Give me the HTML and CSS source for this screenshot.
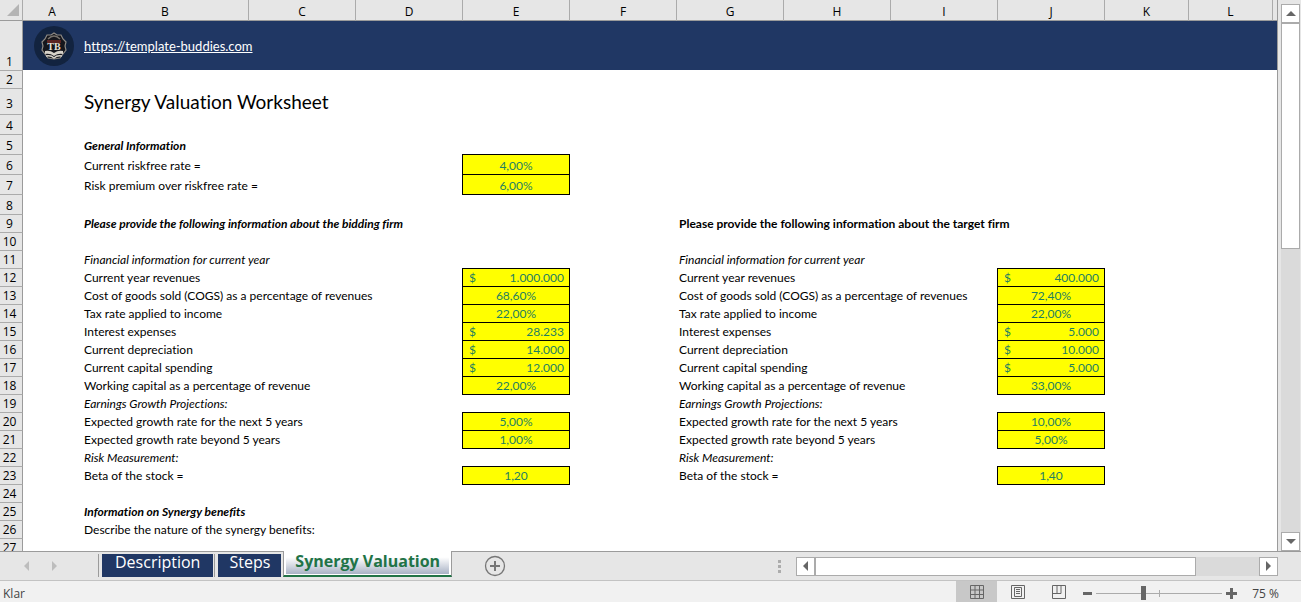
FILE: index.html
```html
<!DOCTYPE html>
<html lang="en">
<head>
  <meta charset="UTF-8">
  <meta name="viewport" content="width=device-width, initial-scale=1.0">
  <title>Synergy Valuation Worksheet</title>
  <link rel="stylesheet" href="styles.css">
</head>
<body>
  <main class="workspace">
    <div class="sheet">
      <table class="grid">
        <colgroup>
          <col class="col-head">
          <col class="col-a">
          <col class="col-b">
          <col class="col-std" span="8">
          <col class="col-end" span="2">
          <col>
        </colgroup>
        <thead>
          <tr>
            <th class="corner"><svg width="12" height="12" viewBox="0 0 12 12"><path d="M12 0v12H0z" fill="#b4b4b4"/></svg></th>
            <th>A</th><th>B</th><th>C</th><th>D</th><th>E</th><th>F</th><th>G</th><th>H</th><th>I</th><th>J</th><th>K</th><th>L</th><th></th>
          </tr>
        </thead>
        <tbody>
          <tr class="banner">
            <th>1</th>
            <td class="logo-cell">
              <svg class="logo" width="40" height="40" viewBox="0 0 40 40">
                <circle cx="20" cy="20" r="20" fill="#12233f"/>
                <path d="M20 7l3 2 4 0 2 4 3 3-1 4 1 4-3 4-3 4-6 1-6-1-3-4-3-4 1-4-1-4 3-3 2-4 4 0z" fill="#15161c" stroke="#8f8b85" stroke-width="1.2"/>
                <path d="M14 13q6-6 12 0" fill="none" stroke="#77736d" stroke-width="1.5"/>
                <path d="M13 14h14v3H13z" fill="#5c2523"/>
                <text x="20" y="24" class="logo-text">TB</text>
                <path d="M11 25q5-1 9 2 4-3 9-2v3q-5-1-9 2-4-3-9-2z" fill="#d6d2c9"/>
                <path d="M12 30q5-1 8 2 3-3 8-2" fill="none" stroke="#d6d2c9" stroke-width="1.5"/>
              </svg>
            </td>
            <td colspan="12"><a href="https://template-buddies.com">https://template-buddies.com</a></td>
          </tr>
          <tr><th>2</th><td colspan="13"></td></tr>
          <tr class="title-row"><th>3</th><td></td><td colspan="12" class="title">Synergy Valuation Worksheet</td></tr>
          <tr class="tall"><th>4</th><td colspan="13"></td></tr>
          <tr class="tall"><th>5</th><td></td><td colspan="12" class="bold italic">General Information</td></tr>
          <tr class="tall"><th>6</th><td></td><td colspan="3">Current riskfree rate =</td><td class="input">4,00%</td><td colspan="8"></td></tr>
          <tr class="tall"><th>7</th><td></td><td colspan="3">Risk premium over riskfree rate =</td><td class="input">6,00%</td><td colspan="8"></td></tr>
          <tr class="tall"><th>8</th><td colspan="13"></td></tr>
          <tr><th>9</th><td></td><td colspan="5" class="bold italic">Please provide the following information about the bidding firm</td><td colspan="7" class="bold">Please provide the following information about the target firm</td></tr>
          <tr><th>10</th><td colspan="13"></td></tr>
          <tr><th>11</th><td></td><td colspan="5" class="italic">Financial information for current year</td><td colspan="7" class="italic">Financial information for current year</td></tr>
          <tr><th>12</th><td></td><td colspan="3">Current year revenues</td><td class="input"><div class="money"><span>$</span><span>1.000.000</span></div></td><td></td><td colspan="3">Current year revenues</td><td class="input"><div class="money"><span>$</span><span>400.000</span></div></td><td colspan="3"></td></tr>
          <tr><th>13</th><td></td><td colspan="3">Cost of goods sold (COGS) as a percentage of revenues</td><td class="input">68,60%</td><td></td><td colspan="3">Cost of goods sold (COGS) as a percentage of revenues</td><td class="input">72,40%</td><td colspan="3"></td></tr>
          <tr><th>14</th><td></td><td colspan="3">Tax rate applied to income</td><td class="input">22,00%</td><td></td><td colspan="3">Tax rate applied to income</td><td class="input">22,00%</td><td colspan="3"></td></tr>
          <tr><th>15</th><td></td><td colspan="3">Interest expenses</td><td class="input"><div class="money"><span>$</span><span>28.233</span></div></td><td></td><td colspan="3">Interest expenses</td><td class="input"><div class="money"><span>$</span><span>5.000</span></div></td><td colspan="3"></td></tr>
          <tr><th>16</th><td></td><td colspan="3">Current depreciation</td><td class="input"><div class="money"><span>$</span><span>14.000</span></div></td><td></td><td colspan="3">Current depreciation</td><td class="input"><div class="money"><span>$</span><span>10.000</span></div></td><td colspan="3"></td></tr>
          <tr><th>17</th><td></td><td colspan="3">Current capital spending</td><td class="input"><div class="money"><span>$</span><span>12.000</span></div></td><td></td><td colspan="3">Current capital spending</td><td class="input"><div class="money"><span>$</span><span>5.000</span></div></td><td colspan="3"></td></tr>
          <tr><th>18</th><td></td><td colspan="3">Working capital as a percentage of revenue</td><td class="input">22,00%</td><td></td><td colspan="3">Working capital as a percentage of revenue</td><td class="input">33,00%</td><td colspan="3"></td></tr>
          <tr><th>19</th><td></td><td colspan="5" class="italic">Earnings Growth Projections:</td><td colspan="7" class="italic">Earnings Growth Projections:</td></tr>
          <tr><th>20</th><td></td><td colspan="3">Expected growth rate for the next 5 years</td><td class="input">5,00%</td><td></td><td colspan="3">Expected growth rate for the next 5 years</td><td class="input">10,00%</td><td colspan="3"></td></tr>
          <tr><th>21</th><td></td><td colspan="3">Expected growth rate beyond 5 years</td><td class="input">1,00%</td><td></td><td colspan="3">Expected growth rate beyond 5 years</td><td class="input">5,00%</td><td colspan="3"></td></tr>
          <tr><th>22</th><td></td><td colspan="5" class="italic">Risk Measurement:</td><td colspan="7" class="italic">Risk Measurement:</td></tr>
          <tr><th>23</th><td></td><td colspan="3">Beta of the stock =</td><td class="input">1,20</td><td></td><td colspan="3">Beta of the stock =</td><td class="input">1,40</td><td colspan="3"></td></tr>
          <tr><th>24</th><td colspan="13"></td></tr>
          <tr><th>25</th><td></td><td colspan="12" class="bold italic">Information on Synergy benefits</td></tr>
          <tr><th>26</th><td></td><td colspan="12">Describe the nature of the synergy benefits:</td></tr>
          <tr><th>27</th><td colspan="13"></td></tr>
        </tbody>
      </table>
    </div>
    <div class="vscroll">
      <button class="scroll-btn" aria-label="Scroll up"><svg width="10" height="5" viewBox="0 0 10 5"><path d="M5 0l5 5H0z"/></svg></button>
      <div class="vtrack"><div class="vthumb"></div></div>
      <button class="scroll-btn" aria-label="Scroll down"><svg width="10" height="5" viewBox="0 0 10 5"><path d="M0 0h10L5 5z"/></svg></button>
    </div>
  </main>

  <div class="tabbar">
    <div class="tab-nav">
      <button aria-label="Previous sheet"><svg width="5" height="10" viewBox="0 0 5 10"><path d="M5 0v10L0 5z" fill="#bdbdbd"/></svg></button>
      <button aria-label="Next sheet"><svg width="5" height="10" viewBox="0 0 5 10"><path d="M0 0v10l5-5z" fill="#bdbdbd"/></svg></button>
    </div>
    <nav class="tabs">
      <button class="tab">Description</button>
      <button class="tab">Steps</button>
      <button class="tab active"><span>Synergy Valuation</span></button>
    </nav>
    <button class="add-sheet" aria-label="New sheet">
      <svg width="22" height="22" viewBox="0 0 22 22" fill="none" stroke="#767676">
        <circle cx="11" cy="11" r="9.5" stroke-width="1.3"/>
        <path d="M11 6v10M6 11h10" stroke-width="2"/>
      </svg>
    </button>
    <svg class="splitter" width="3" height="13" viewBox="0 0 3 13"><path d="M0 0h3v3H0zM0 5h3v3H0zM0 10h3v3H0z" fill="#acacac"/></svg>
    <div class="hscroll">
      <button class="scroll-btn" aria-label="Scroll left"><svg width="5" height="10" viewBox="0 0 5 10"><path d="M5 0v10L0 5z"/></svg></button>
      <div class="htrack"><div class="hthumb"></div></div>
      <button class="scroll-btn" aria-label="Scroll right"><svg width="5" height="10" viewBox="0 0 5 10"><path d="M0 0v10l5-5z"/></svg></button>
    </div>
  </div>

  <footer class="statusbar">
    <span class="state">Klar</span>
    <div class="views">
      <button class="view selected" aria-label="Normal view">
        <svg width="14" height="14" viewBox="0 0 14 14" fill="none" stroke="#666"><path d="M.5 .5h13v13H.5zM.5 5h13M.5 9.500h13M5 .5v13M9.500 .5v13"/></svg>
      </button>
      <button class="view" aria-label="Page layout">
        <svg width="14" height="14" viewBox="0 0 14 14" fill="none" stroke="#666"><path d="M.5 .5h13v13H.5zM3.500 2.500h7v9h-7zM5 4.500h4M5 6.500h4M5 8.500h4"/></svg>
      </button>
      <button class="view" aria-label="Page break preview">
        <svg width="14" height="14" viewBox="0 0 14 14" fill="none" stroke="#666"><path d="M.5 .5h13v13H.5zM.5 8.500h8.500V.5M5 .5v8"/></svg>
      </button>
    </div>
    <div class="zoom">
      <button aria-label="Zoom out"><svg width="9" height="11" viewBox="0 0 9 11"><path d="M0 4h9v3H0z" fill="#666"/></svg></button>
      <input type="range" min="0" max="100" value="37" aria-label="Zoom">
      <button aria-label="Zoom in"><svg width="11" height="11" viewBox="0 0 11 11"><path d="M4 0h3v4h4v3H7v4H4V7H0V4h4z" fill="#666"/></svg></button>
      <span class="zoom-value">75 %</span>
    </div>
  </footer>
</body>
</html>
```
FILE: styles.css
```css
* {
  box-sizing: border-box;
}

body {
  margin: 0;
  height: 100vh;
  display: flex;
  flex-direction: column;
  overflow: hidden;
  background: #e6e6e6;
  color: #000;
  font-family: "Open Sans", "Noto Sans", sans-serif;
  font-size: 12px;
}

button {
  display: flex;
  align-items: center;
  justify-content: center;
  margin: 0;
  padding: 0;
  border: 0;
  background: none;
  font: inherit;
}

svg {
  display: block;
}

/* worksheet */
.workspace {
  flex: 1;
  min-height: 0;
  display: flex;
  border-bottom: 1px solid #9b9b9b;
}

.sheet {
  flex: 1;
  min-width: 0;
  overflow: hidden;
  background: #fff;
  border-right: 1px solid #9b9b9b;
}

.grid {
  width: 100%;
  table-layout: fixed;
  border-collapse: separate;
  border-spacing: 0;
}

.col-head { width: 23px; }
.col-a { width: 59px; }
.col-b { width: 167px; }
.col-std { width: 107px; }
.col-end { width: 84px; }

.grid th {
  padding: 0;
  background: #e6e6e6;
  border-right: 1px solid #ababab;
  border-bottom: 1px solid #ababab;
  font-weight: normal;
  line-height: 16px;
}

.grid thead th {
  height: 21px;
  padding-top: 4px;
  border-bottom-color: #9b9b9b;
}

.grid thead th:last-child {
  border-right: 0;
}

.grid thead .corner {
  padding: 0 0 0 7px;
}

.grid tbody th {
  height: 18px;
  padding-right: 3px;
  border-right-color: #9b9b9b;
}

.grid td {
  padding: 0 2px;
  font-family: Lato, sans-serif;
  font-variant-ligatures: none;
  line-height: 16px;
  white-space: nowrap;
}

.grid .tall th {
  height: 20px;
  padding-top: 2px;
}

.grid .tall td {
  padding-top: 2px;
}

.grid .title-row th {
  height: 26px;
  padding-top: 4px;
}

.grid .title {
  font-size: 19px;
  line-height: 24px;
}

.grid .banner th {
  height: 50px;
  vertical-align: bottom;
}

.grid .banner td {
  background: #203764;
  border-bottom: 1px solid #fff;
  font-size: 13px;
}

.grid .banner .logo-cell {
  padding-left: 11px;
}

.banner a {
  color: #fff;
}

.logo-text {
  fill: #e4e0d8;
  font: bold 10px "Liberation Serif", serif;
  text-anchor: middle;
}

.bold { font-weight: bold; }
.italic { font-style: italic; }

.grid .input {
  background: #ff0;
  color: #1f8060;
  text-align: center;
  border-right: 1px solid #000;
  border-bottom: 1px solid #000;
  box-shadow: -1px 0 #000, 0 -1px #000, -1px -1px #000;
}

.money {
  display: flex;
  justify-content: space-between;
  padding: 0 3px 0 4px;
}

/* scroll bars */
.scroll-btn {
  flex: none;
  width: 19px;
  height: 19px;
  background: #fff;
  border: 1px solid #ababab;
}

.scroll-btn path {
  fill: #666;
}

.vscroll {
  display: flex;
  flex-direction: column;
  width: 19px;
  margin: 4px 1px 0 3px;
}

.vtrack {
  flex: 1;
  background: #dadada;
}

.vthumb {
  height: calc(100% * 4 / 9);
  background: #fff;
  border: 1px solid #ababab;
}

.hscroll {
  flex: 0 1 482px;
  display: flex;
  margin-right: 23px;
}

.htrack {
  flex: 1;
  background: #dadada;
}

.hthumb {
  width: calc(100% * 6 / 7);
  height: 19px;
  background: #fff;
  border: 1px solid #ababab;
}

/* sheet tabs */
.tabbar {
  flex: none;
  display: flex;
  align-items: center;
  height: 29px;
  border-bottom: 1px solid #c3c3c3;
}

.tab-nav {
  display: flex;
  gap: 23px;
  padding-left: 24px;
  width: 99px;
}

.tabs {
  display: flex;
  align-self: stretch;
  align-items: flex-start;
}

.tab {
  height: 23px;
  margin: 2px 2px 0 3px;
  padding: 0 13px 7px;
  color: #fff;
  background: #203764;
  font-size: 16px;
  line-height: 16px;
  box-shadow: -3px 0 #e6e6e6, -4px 0 #9b9b9b;
}

.tab + .tab {
  padding: 0 11px 7px;
}

.tabs .tab.active {
  height: 26px;
  margin: -1px 0 0;
  padding: 2px 2px 1px;
  background: #fff;
  color: #217346;
  border: 1px solid #9b9b9b;
  border-width: 0 1px 2px;
  border-bottom-color: #217346;
  font-weight: bold;
  box-shadow: none;
}

.active span {
  padding: 0 9px 4px;
  line-height: 17px;
  background: linear-gradient(#fff 20%, #a9b2c5);
}

.add-sheet {
  margin-left: 32px;
}

.splitter {
  margin: 0 15px 0 auto;
}

/* status bar */
.statusbar {
  flex: none;
  display: flex;
  height: 21px;
  align-items: center;
  background: #f1f1f1;
  color: #444;
}

.state {
  margin-right: auto;
  padding: 3px 0 0 3px;
}

.views {
  display: flex;
  align-self: stretch;
}

.view {
  width: 41px;
}

.view.selected {
  background: #c8c8c8;
}

.zoom {
  display: flex;
  align-items: center;
  gap: 4px;
  padding: 3px 22px 0 4px;
}

.zoom input {
  appearance: none;
  width: 126px;
  height: 14px;
  margin: 0;
  background:
    linear-gradient(#ababab, #ababab) 50% 50% / 1px 7px no-repeat,
    linear-gradient(#ababab, #ababab) 50% 50% / 100% 1px no-repeat;
}

.zoom input::-webkit-slider-thumb {
  appearance: none;
  width: 5px;
  height: 14px;
  background: #666;
}

.zoom-value {
  margin-left: 11px;
}
```
